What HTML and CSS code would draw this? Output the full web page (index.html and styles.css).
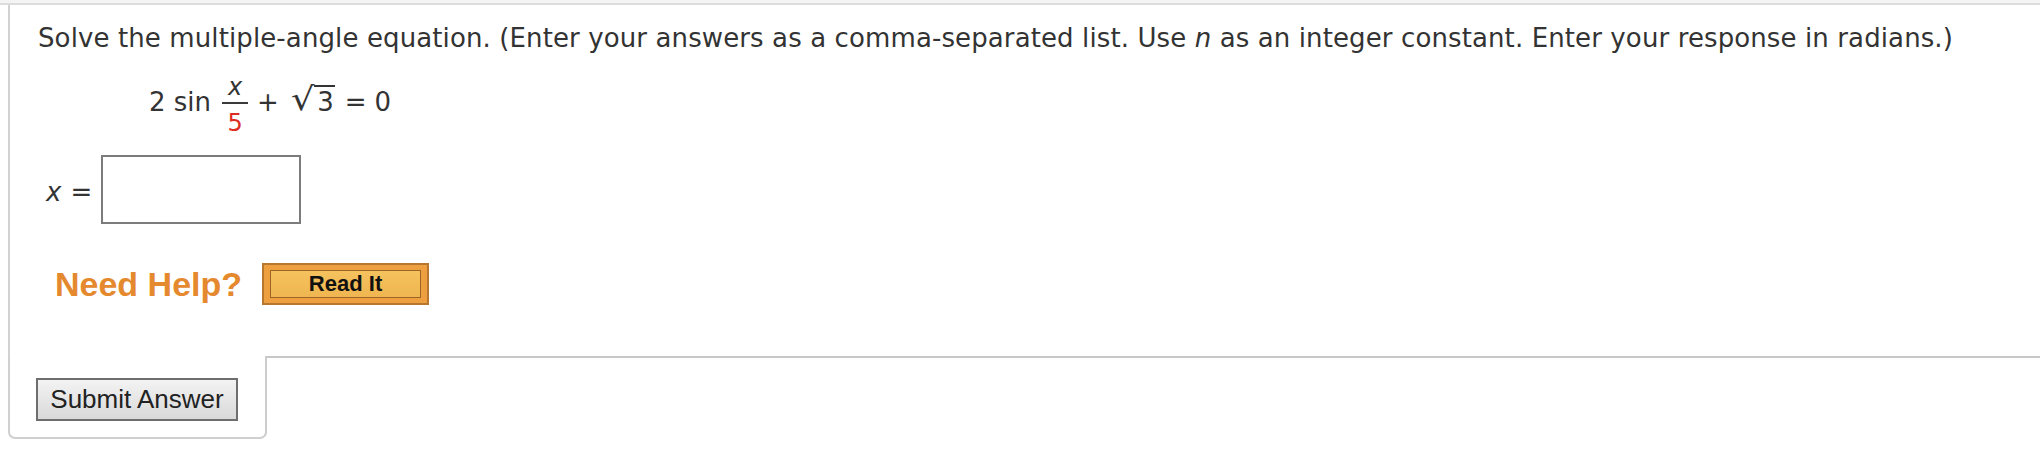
FILE: index.html
```html
<!DOCTYPE html>
<html lang="en">
<head>
<meta charset="utf-8">
<title>Multiple-angle equation</title>
<link rel="stylesheet" href="styles.css">
</head>
<body>
<div class="topbar"></div>
<div class="card">
  <div class="question">
    <p class="prompt">Solve the multiple-angle equation. (Enter your answers as a comma-separated list. Use <i>n</i> as an integer constant. Enter your response in radians.)</p>
    <div class="equation">
      <span class="term">2 sin</span>
      <span class="frac"><span class="num">x</span><span class="bar"></span><span class="den">5</span></span>
      <span class="op plus">+</span>
      <span class="sqrt"><span class="radical">√</span><span class="radicand">3</span></span>
      <span class="op equals">=</span>
      <span class="term zero">0</span>
    </div>
    <div class="answer">
      <span class="var">x</span><span class="eq">=</span><input class="answer-input" type="text" aria-label="x">
    </div>
    <div class="help">
      <span class="help-label">Need Help?</span>
      <button class="read-it" type="button"><span class="read-it-face">Read It</span></button>
    </div>
  </div>
  <div class="footer">
    <div class="submit-tab"><button class="submit" type="button">Submit Answer</button></div>
    <div class="footer-rest"></div>
  </div>
</div>
</body>
</html>
```

FILE: styles.css
```css
* { box-sizing: border-box; }
body {
  margin: 0;
  background: #ffffff;
  font-family: "DejaVu Sans", Verdana, sans-serif;
  color: #333333;
}
.topbar {
  height: 5px;
  background: #f4f4f4;
  border-bottom: 2px solid #dddddd;
}
.card { margin-left: 8px; }
.question {
  border-left: 2px solid #d2d2d2;
  padding: 18px 0 51px 28px;
}
.prompt {
  margin: 0;
  font-size: 26px;
  letter-spacing: 0.11px;
  line-height: 30px;
  white-space: nowrap;
}
.equation {
  display: flex;
  align-items: flex-start;
  margin: 22px 0 0 111px;
  font-size: 26px;
  line-height: 30px;
  white-space: pre;
}
.term, .op { margin-top: 12px; }
.frac {
  display: flex;
  flex-direction: column;
  align-items: center;
  margin: 0 9px 0 11px;
  font-size: 24px;
  line-height: 24px;
}
.num { font-style: italic; padding-bottom: 3px; }
.bar { width: 26px; height: 2px; background: #3a3a3a; }
.den { color: #dd2c22; padding-top: 7px; }
.sqrt { display: flex; align-items: flex-start; margin-left: 12px; }
.radical {
  font-size: 32px;
  line-height: 30px;
  margin-top: 9px;
  transform: scaleX(1.15);
  transform-origin: left center;
}
.radicand {
  margin: 10px 0 0 3px;
  border-top: 2px solid #333333;
  padding: 0 1px 0 3px;
  line-height: 30px;
}
.equals { margin-left: 10px; }
.zero { margin-left: 8px; }
.answer {
  display: flex;
  align-items: center;
  margin: 20px 0 0 8px;
  font-size: 26px;
  line-height: 30px;
}
.var { font-style: italic; margin-top: 4px; }
.eq { margin: 4px 0 0 9px; }
.answer-input {
  margin-left: 9px;
  width: 200px;
  height: 69px;
  border: 2px solid #7c7c7c;
  background: #ffffff;
  padding: 0 6px;
  font: 24px "DejaVu Sans", sans-serif;
}
.help {
  display: flex;
  align-items: center;
  margin: 39px 0 0 17px;
}
.help-label {
  font: bold 34px "Liberation Sans", Arial, sans-serif;
  color: #e5892f;
}
.read-it {
  margin-left: 20px;
  width: 167px;
  height: 42px;
  padding: 5px 6px;
  border: 2px solid #b8772f;
  background: #ee9f40;
  display: flex;
  cursor: pointer;
}
.read-it-face {
  flex: 1;
  display: flex;
  align-items: center;
  justify-content: center;
  border: 1px solid #9c6526;
  background: linear-gradient(#f5c25e, #efb550);
  font: bold 22px "Liberation Sans", Arial, sans-serif;
  color: #111111;
}
.footer { display: flex; }
.submit-tab {
  flex: none;
  width: 259px;
  border-left: 2px solid #d0d0d0;
  border-right: 2px solid #cccccc;
  border-bottom: 2px solid #d0d0d0;
  border-radius: 0 0 7px 7px;
  padding: 22px 0 16px 26px;
}
.submit {
  width: 202px;
  height: 43px;
  padding: 0;
  border: 2px solid #6e6e6e;
  background: linear-gradient(#f3f3f3, #d9d9d9);
  font: 26px "Liberation Sans", Arial, sans-serif;
  color: #222222;
  cursor: pointer;
}
.footer-rest {
  flex: 1;
  border-top: 2px solid #c8c8c8;
}
```
